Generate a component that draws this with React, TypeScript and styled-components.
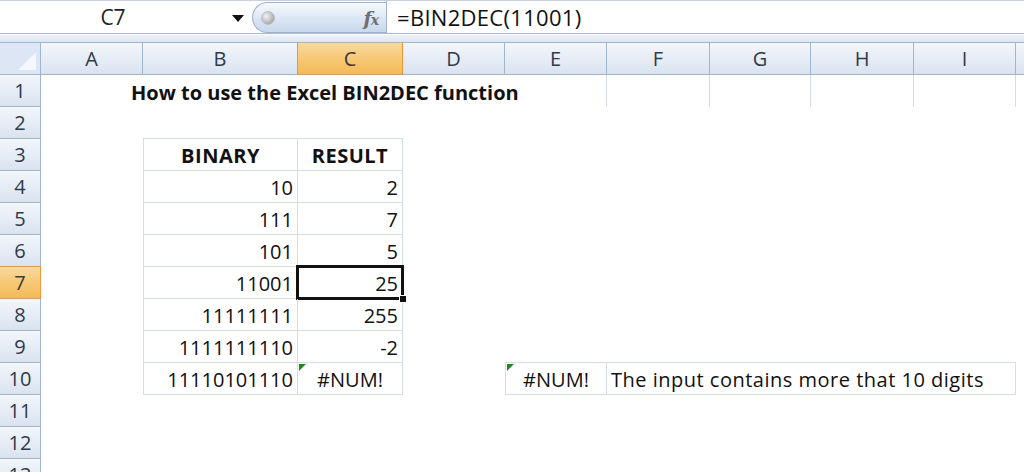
import React from "react";
import styled, { createGlobalStyle, css } from "styled-components";

const GlobalStyle = createGlobalStyle`
  html, body {
    margin: 0;
    padding: 0;
    background: #ffffff;
  }
  body {
    width: 1024px;
    height: 472px;
    overflow: hidden;
    font-family: "Open Sans", Lato, "Liberation Sans", sans-serif;
    color: #111;
  }
`;

const GRID = "#d4dcea";
const HEAD_LINE = "#9eb6ce";

// the J column is only a sliver at the right edge, so its letter stays hidden
const COLS = [
  { key: "A", width: 102, label: "A" },
  { key: "B", width: 155, label: "B" },
  { key: "C", width: 105, label: "C" },
  { key: "D", width: 102, label: "D" },
  { key: "E", width: 102, label: "E" },
  { key: "F", width: 103, label: "F" },
  { key: "G", width: 101, label: "G" },
  { key: "H", width: 103, label: "H" },
  { key: "I", width: 102, label: "I" },
  { key: "J", width: 102, label: "" },
];

const ACTIVE_COL = "C";
const ACTIVE_ROW = 7;

type Sides = { t?: boolean; r?: boolean; b?: boolean; l?: boolean };

type CellDef = {
  span?: number;
  text?: string;
  align?: "left" | "right" | "center";
  bold?: boolean;
  loose?: boolean;
  indent?: number;
  box?: Sides;
  error?: boolean;
  selected?: boolean;
};

const Page = styled.div`
  width: 1024px;
  height: 472px;
  overflow: hidden;
  background: #fff;
`;

const FormulaBar = styled.div`
  display: flex;
  height: 32px;
  border-top: 1px solid #c3d1e3;
  border-bottom: 1px solid #a6bad3;
  background: #fff;
`;

const NameBox = styled.div`
  width: 252px;
  display: flex;
  align-items: center;
`;

const NameText = styled.div`
  width: 226px;
  text-align: center;
  font-size: 21px;
  color: #222;
`;

const DropArrow = styled.div`
  width: 0;
  height: 0;
  border-left: 6px solid transparent;
  border-right: 6px solid transparent;
  border-top: 7px solid #111;
  margin-left: 6px;
  margin-top: 2px;
`;

const FxPill = styled.div`
  width: 134px;
  margin-top: 1px;
  display: flex;
  align-items: center;
  justify-content: space-between;
  padding: 0 8px 0 8px;
  box-sizing: border-box;
  border: 1px solid #9fb2cb;
  border-right: none;
  border-radius: 16px 0 0 16px;
  background: linear-gradient(#f6f9fd, #dbe6f4 55%, #c9d8ec);
`;

const Knob = styled.div`
  width: 12px;
  height: 12px;
  border-radius: 50%;
  background: radial-gradient(circle at 35% 35%, #f4f4f4, #a9a9a9 75%);
  border: 1px solid #b8c2cf;
`;

const FxLabel = styled.span`
  font-family: "DejaVu Serif", "Liberation Serif", serif;
  font-style: italic;
  font-weight: bold;
  font-size: 19px;
  color: #6f6f6f;
  letter-spacing: -1px;

  small {
    font-size: 14px;
  }
`;

const FormulaInput = styled.div`
  flex: 1;
  display: flex;
  align-items: center;
  padding-left: 10px;
  border-left: 1px solid #9fb2cb;
  font-size: 22px;
  letter-spacing: 0.3px;
  color: #111;
`;

const Band = styled.div`
  height: 7px;
  border-top: 1px solid #ffffff;
  border-bottom: 1px solid ${HEAD_LINE};
  background: linear-gradient(#eef3fa, #dbe5f2);
`;

const Sheet = styled.div`
  display: grid;
  grid-template-columns: 41px ${COLS.map((c) => `${c.width}px`).join(" ")};
  grid-auto-rows: 32px;
  width: max-content;
`;

const headerBase = css<{ $active?: boolean }>`
  box-sizing: border-box;
  display: flex;
  align-items: center;
  justify-content: center;
  font-size: 20px;
  color: ${(p) => (p.$active ? "#3a3a3a" : "#2f3b4a")};
  background: ${(p) =>
    p.$active
      ? "linear-gradient(#f9d99f, #f6c56f 60%, #f3bb59)"
      : "linear-gradient(#f3f6fb, #e4ebf5 60%, #d9e2ef)"};
`;

const Corner = styled.div`
  box-sizing: border-box;
  position: relative;
  background: #dce6f4;
  border-right: 1px solid ${HEAD_LINE};
  border-bottom: 1px solid ${HEAD_LINE};
  display: flex;
  align-items: flex-end;
  justify-content: flex-end;
  padding: 0 4px 4px 0;
`;

const ColHeader = styled.div<{ $active?: boolean }>`
  ${headerBase};
  border-right: 1px solid ${(p) => (p.$active ? "#f29536" : HEAD_LINE)};
  border-bottom: 1px solid ${(p) => (p.$active ? "#f29536" : HEAD_LINE)};
  ${(p) => p.$active && "border-left: 1px solid #f29536; margin-left: -1px;"}
`;

const RowHeader = styled.div<{ $active?: boolean }>`
  ${headerBase};
  border-right: 1px solid ${(p) => (p.$active ? "#f29536" : HEAD_LINE)};
  border-bottom: 1px solid ${(p) => (p.$active ? "#f29536" : HEAD_LINE)};
  ${(p) => p.$active && "border-top: 1px solid #f29536; margin-top: -1px;"}
`;

const Cell = styled.div<{
  $span: number;
  $align: "left" | "right" | "center";
  $bold?: boolean;
  $loose?: boolean;
  $indent: number;
  $t?: boolean;
  $r?: boolean;
  $b?: boolean;
  $l?: boolean;
  $error?: boolean;
  $selected?: boolean;
}>`
  grid-column: span ${(p) => p.$span};
  position: relative;
  box-sizing: border-box;
  display: flex;
  align-items: center;
  justify-content: ${(p) =>
    p.$align === "right" ? "flex-end" : p.$align === "center" ? "center" : "flex-start"};
  padding: 2px 4px 0 ${(p) => p.$indent}px;
  white-space: nowrap;
  overflow: visible;
  font-size: 20px;
  letter-spacing: ${(p) => (p.$loose ? "0.5px" : "0")};
  font-weight: ${(p) => (p.$bold ? 700 : 400)};
  color: #111;
  border-top: ${(p) => (p.$t ? `1px solid ${GRID}` : "none")};
  border-right: ${(p) => (p.$r ? `1px solid ${GRID}` : "none")};
  border-bottom: ${(p) => (p.$b ? `1px solid ${GRID}` : "none")};
  border-left: ${(p) => (p.$l ? `1px solid ${GRID}` : "none")};
  margin-top: ${(p) => (p.$t ? "-1px" : "0")};

  ${(p) =>
    p.$error &&
    css`
      &::before {
        content: "";
        position: absolute;
        left: 1px;
        top: 1px;
        width: 0;
        height: 0;
        border-top: 7px solid #1e8a1e;
        border-right: 7px solid transparent;
      }
    `}

  ${(p) =>
    p.$selected &&
    css`
      &::after {
        content: "";
        position: absolute;
        left: -2px;
        top: -2px;
        right: -2px;
        bottom: -2px;
        border: 3px solid #111;
        pointer-events: none;
      }
    `}
`;

const FillHandle = styled.span`
  position: absolute;
  right: -5px;
  bottom: -5px;
  width: 6px;
  height: 6px;
  background: #111;
  border: 1px solid #fff;
  z-index: 2;
`;

const title = "How to use the Excel BIN2DEC function";

const tableRows: [string, string, boolean?][] = [
  ["10", "2"],
  ["111", "7"],
  ["101", "5"],
  ["11001", "25"],
  ["11111111", "255"],
  ["1111111110", "-2"],
  ["11110101110", "#NUM!", true],
];

function buildRow(n: number): CellDef[] {
  if (n === 1) {
    return [
      { span: 5, text: title, bold: true, indent: 90, box: { r: true } },
      { box: { r: true } },
      { box: { r: true } },
      { box: { r: true } },
      { box: { r: true } },
      {},
    ];
  }
  const cells: CellDef[] = [];
  if (n === 3) {
    cells.push({});
    cells.push({ text: "BINARY", bold: true, loose: true, align: "center", box: { t: true, r: true, b: true, l: true } });
    cells.push({ text: "RESULT", bold: true, loose: true, align: "center", box: { t: true, r: true, b: true } });
  } else if (n >= 4 && n <= 10) {
    const [bin, res, err] = tableRows[n - 4];
    cells.push({});
    cells.push({ text: bin, align: "right", box: { r: true, b: true, l: true } });
    cells.push({
      text: res,
      align: err ? "center" : "right",
      error: err,
      selected: n === ACTIVE_ROW,
      box: { r: true, b: true },
    });
  }
  if (n === 10) {
    cells.push({});
    cells.push({ text: "#NUM!", align: "center", error: true, box: { t: true, r: true, b: true, l: true } });
    cells.push({
      span: 4,
      text: "The input contains more that 10 digits",
      loose: true,
      indent: 4,
      box: { t: true, r: true, b: true },
    });
  }
  const used = cells.reduce((s, c) => s + (c.span ?? 1), 0);
  for (let i = used; i < COLS.length; i++) cells.push({});
  return cells;
}

const rowNumbers = Array.from({ length: 13 }, (_, i) => i + 1);

export default function App() {
  return (
    <Page>
      <GlobalStyle />
      <FormulaBar>
        <NameBox>
          <NameText>C7</NameText>
          <DropArrow />
        </NameBox>
        <FxPill>
          <Knob />
          <FxLabel>
            f<small>x</small>
          </FxLabel>
        </FxPill>
        <FormulaInput>=BIN2DEC(11001)</FormulaInput>
      </FormulaBar>
      <Band />
      <Sheet>
        <Corner>
          <svg width="18" height="18" viewBox="0 0 18 18">
            <path d="M18 0 L18 18 L0 18 Z" fill="#f4f7fb" />
          </svg>
        </Corner>
        {COLS.map((c) => (
          <ColHeader key={c.key} $active={c.key === ACTIVE_COL}>
            {c.label}
          </ColHeader>
        ))}
        {rowNumbers.map((n) => (
          <React.Fragment key={n}>
            <RowHeader $active={n === ACTIVE_ROW}>{n}</RowHeader>
            {buildRow(n).map((cell, i) => (
              <Cell
                key={i}
                $span={cell.span ?? 1}
                $align={cell.align ?? "left"}
                $bold={cell.bold}
                $loose={cell.loose}
                $indent={cell.indent ?? 4}
                $t={cell.box?.t}
                $r={cell.box?.r}
                $b={cell.box?.b}
                $l={cell.box?.l}
                $error={cell.error}
                $selected={cell.selected}
              >
                {cell.text}
                {cell.selected && <FillHandle />}
              </Cell>
            ))}
          </React.Fragment>
        ))}
      </Sheet>
    </Page>
  );
}
